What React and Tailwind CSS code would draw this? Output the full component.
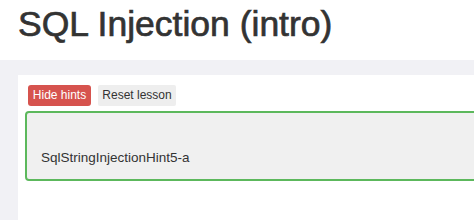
import React from 'react';

export default function App() {
  return (
    <div className="w-[474px] h-[220px] overflow-hidden bg-white font-['Liberation_Sans',Arial,sans-serif]">
      <div className="h-[60px] pl-[18px] pt-[2px]">
        <h1 className="text-[35.5px] leading-[44px] text-[#333] [-webkit-text-stroke:0.7px_#333]">SQL Injection (intro)</h1>
      </div>
      <div className="h-[160px] bg-[#f1f1f5] pl-[18px] pt-[15px]">
        <div className="h-full bg-white pl-[7px] pt-[10px]">
          <div className="flex gap-[7px] pl-[3px]">
            <button className="h-[21px] w-[63px] rounded-[3px] bg-[#d6534e] text-white text-[12px] leading-[21px]">Hide hints</button>
            <button className="h-[21px] w-[78px] rounded-[2px] bg-[#eeeeee] text-[#333] text-[12px] leading-[21px]">Reset lesson</button>
          </div>
          <div className="mt-[5px] h-[70px] w-[470px] rounded-[4px] border-2 border-[#5cb85c] bg-[#f0f0f0] pl-[14px] pt-[36px]">
            <p className="text-[13.5px] leading-[18px] text-[#333]">SqlStringInjectionHint5-a</p>
          </div>
        </div>
      </div>
    </div>
  );
}
